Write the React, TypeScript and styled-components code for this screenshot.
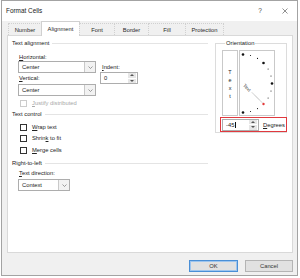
import styled, { createGlobalStyle } from "styled-components";

const GlobalStyle = createGlobalStyle`
  html, body {
    margin: 0;
    padding: 0;
    background: #ffffff;
  }
  body {
    font-family: "Liberation Sans", Arial, sans-serif;
    font-size: 5.8px;
    line-height: 8px;
    color: #222222;
  }
`;

const Window = styled.div`
  box-sizing: border-box;
  width: 297px;
  height: 276px;
  margin-left: 1px;
  border: 1px solid #a3a3a3;
  background: #f0f0f0;
  display: flex;
  flex-direction: column;
`;

const TitleBar = styled.div`
  height: 20px;
  background: #ffffff;
  display: flex;
  align-items: center;
  padding-left: 4px;
`;

const Title = styled.div`
  flex: 1;
  font-size: 6.4px;
  color: #1a1a1a;
`;

const TitleButton = styled.div<{ $w: number }>`
  width: ${(p) => p.$w}px;
  height: 20px;
  display: flex;
  align-items: center;
  justify-content: center;
  font-size: 6.6px;
  color: #444444;
`;

const TabRow = styled.div`
  display: flex;
  align-items: flex-end;
  height: 14px;
  margin-left: 6px;
  position: relative;
  z-index: 1;
`;

const Tab = styled.div<{ $w: number; $active?: boolean }>`
  box-sizing: border-box;
  width: ${(p) => p.$w}px;
  height: ${(p) => (p.$active ? 15 : 12)}px;
  margin-right: -1px;
  margin-bottom: ${(p) => (p.$active ? -1 : 0)}px;
  border: 1px ${(p) => (p.$active ? "solid" : "dotted")} #d0d0d0;
  border-bottom: none;
  background: ${(p) => (p.$active ? "#ffffff" : "#f0f0f0")};
  display: flex;
  align-items: center;
  justify-content: center;
  color: #2a2a2a;
`;

const Panel = styled.div`
  box-sizing: border-box;
  margin: 0 4px 0 5px;
  height: 218px;
  background: #ffffff;
  border: 1px solid #d9d9d9;
  padding: 3px 5px 0 4px;
  display: flex;
  gap: 7px;
`;

const LeftColumn = styled.div`
  width: 196px;
  display: flex;
  flex-direction: column;
`;

const SectionHeader = styled.div<{ $gap: number }>`
  display: flex;
  align-items: center;
  gap: 3px;
  height: 8px;
  margin-top: ${(p) => p.$gap}px;

  &::after {
    content: "";
    flex: 1;
    height: 1px;
    background: #e4e4e4;
  }
`;

const FieldLabel = styled.div<{ $gap: number; $indent?: number }>`
  height: 8px;
  margin-top: ${(p) => p.$gap}px;
  margin-left: ${(p) => p.$indent ?? 7}px;
`;

const Key = styled.span`
  text-decoration: underline;
  text-underline-offset: 1px;
`;

const AlignBlock = styled.div`
  display: flex;
`;

const FieldGroup = styled.div<{ $left: number }>`
  display: flex;
  flex-direction: column;
  margin-left: ${(p) => p.$left}px;
`;

const Select = styled.div<{ $w: number; $gap: number }>`
  box-sizing: border-box;
  width: ${(p) => p.$w}px;
  height: 12px;
  margin-top: ${(p) => p.$gap}px;
  margin-left: 6px;
  border: 1px solid #adadad;
  background: #ffffff;
  display: flex;
`;

const SelectValue = styled.span`
  flex: 1;
  padding-left: 3px;
  display: flex;
  align-items: center;
`;

const SelectArrow = styled.span`
  width: 10px;
  border-left: 1px solid #c9c9c9;
  background: #f2f2f2;
  display: flex;
  align-items: center;
  justify-content: center;
`;

const Spin = styled.div<{ $w: number; $gap: number }>`
  box-sizing: border-box;
  width: ${(p) => p.$w}px;
  height: 12px;
  margin-top: ${(p) => p.$gap}px;
  border: 1px solid #adadad;
  background: #ffffff;
  display: flex;
`;

const SpinText = styled.span`
  flex: 1;
  padding-left: 3px;
  display: flex;
  align-items: center;
`;

const SpinArrows = styled.span`
  width: 8px;
  display: flex;
  flex-direction: column;
  gap: 1px;
  padding: 0 1px 0 0;
`;

const SpinArrow = styled.span`
  flex: 1;
  background: #e6e6e6;
  display: flex;
  align-items: center;
  justify-content: center;
`;

const CheckRow = styled.div<{ $gap: number; $disabled?: boolean }>`
  display: flex;
  align-items: center;
  gap: 5px;
  height: 8px;
  margin-top: ${(p) => p.$gap}px;
  margin-left: 8px;
  color: ${(p) => (p.$disabled ? "#a8a8a8" : "#222222")};
`;

const CheckBox = styled.span<{ $disabled?: boolean }>`
  box-sizing: border-box;
  width: 7px;
  height: 7px;
  border: 1px solid ${(p) => (p.$disabled ? "#cccccc" : "#333333")};
  background: #ffffff;
`;

const OrientationGroup = styled.fieldset`
  box-sizing: border-box;
  width: 72px;
  height: 94px;
  margin: 0;
  padding: 3px 0 0 6px;
  border: 1px solid #dcdcdc;
  display: flex;
  flex-direction: column;
  min-width: 0;
`;

const Legend = styled.legend`
  padding: 0 1px;
  margin-left: 3px;
  line-height: 8px;
`;

const DialRow = styled.div`
  display: flex;
  gap: 1px;
  height: 66px;
`;

const StackedBox = styled.div`
  box-sizing: border-box;
  width: 16px;
  border: 1px solid #c9c9c9;
  display: flex;
  flex-direction: column;
  align-items: center;
  justify-content: center;
  padding-top: 2px;
`;

const StackedLetter = styled.span`
  height: 8px;
  font-size: 5.4px;
`;

const DialBox = styled.div`
  box-sizing: border-box;
  width: 36px;
  border: 1px solid #c9c9c9;
  display: flex;
`;

const DegreeRow = styled.div`
  box-sizing: border-box;
  width: 67px;
  height: 15px;
  margin: 1px 0 0 -2px;
  border: 1px solid #e0393e;
  display: flex;
  align-items: center;
  padding-left: 1px;
  gap: 4px;
`;

const Caret = styled.span`
  display: inline-block;
  width: 1px;
  height: 6px;
  margin-left: 1px;
  background: #111111;
  vertical-align: middle;
`;

const ButtonRow = styled.div`
  display: flex;
  justify-content: flex-end;
  gap: 7px;
  margin-top: 7px;
  padding-right: 4px;
`;

const Button = styled.div<{ $w: number; $default?: boolean }>`
  box-sizing: border-box;
  width: ${(p) => p.$w}px;
  height: 12px;
  background: #e1e1e1;
  border: 1px solid ${(p) => (p.$default ? "#4a8fd6" : "#b4b4b4")};
  box-shadow: ${(p) => (p.$default ? "inset 0 0 0 1px #9ec5ee" : "none")};
  display: flex;
  align-items: center;
  justify-content: center;
  color: #333333;
`;

const Chevron = () => (
  <svg width="5" height="3" viewBox="0 0 5 3">
    <path d="M0.5 0.5 L2.5 2.5 L4.5 0.5" fill="none" stroke="#777" strokeWidth="0.7" />
  </svg>
);

const Triangle = ({ up }: { up?: boolean }) => (
  <svg width="4" height="2" viewBox="0 0 4 2">
    <path d={up ? "M0 2 L2 0 L4 2 Z" : "M0 0 L2 2 L4 0 Z"} fill="#555" />
  </svg>
);

const Dial = () => {
  const cx = 3;
  const cy = 32.5;
  const r = 29;
  const dots = [];
  for (let a = 90; a >= -90; a -= 15) {
    const rad = (a * Math.PI) / 180;
    const x = cx + r * Math.cos(rad);
    const y = cy - r * Math.sin(rad);
    const big = a === 90 || a === 45 || a === 0 || a === -90;
    const red = a === -45;
    dots.push(
      <circle
        key={a}
        cx={x}
        cy={y}
        r={red ? 1.2 : big ? 1.3 : 0.55}
        fill={red ? "#e23a3a" : "#111"}
      />
    );
  }
  const d = Math.SQRT1_2;
  return (
    <svg width="34" height="64" viewBox="0 0 34 64">
      {dots}
      <text
        transform={`translate(${cx} ${cy}) rotate(45)`}
        x="1.5"
        y="1.8"
        fontSize="4.8"
        fontFamily="Liberation Sans, Arial, sans-serif"
        fill="#333"
      >
        Text
      </text>
      <line
        x1={cx + 13 * d}
        y1={cy + 13 * d}
        x2={cx + 27.5 * d}
        y2={cy + 27.5 * d}
        stroke="#444"
        strokeWidth="0.6"
        strokeDasharray="0.8 0.8"
      />
    </svg>
  );
};

const tabs = [
  { name: "Number", w: 34 },
  { name: "Alignment", w: 39, active: true },
  { name: "Font", w: 36 },
  { name: "Border", w: 35 },
  { name: "Fill", w: 38 },
  { name: "Protection", w: 39 },
];

const App = () => {
  return (
    <>
      <GlobalStyle />
      <Window>
        <TitleBar>
          <Title>Format Cells</Title>
          <TitleButton $w={24}>?</TitleButton>
          <TitleButton $w={25}>
            <svg width="6" height="6" viewBox="0 0 6 6">
              <path d="M0.5 0.5 L5.5 5.5 M5.5 0.5 L0.5 5.5" stroke="#444" strokeWidth="0.6" />
            </svg>
          </TitleButton>
        </TitleBar>

        <TabRow>
          {tabs.map((t) => (
            <Tab key={t.name} $w={t.w} $active={t.active}>
              {t.name}
            </Tab>
          ))}
        </TabRow>

        <Panel>
          <LeftColumn>
            <SectionHeader $gap={0}>Text alignment</SectionHeader>
            <AlignBlock>
              <FieldGroup $left={0}>
                <FieldLabel $gap={6}>
                  <Key>H</Key>orizontal:
                </FieldLabel>
                <Select $w={78} $gap={0}>
                  <SelectValue>Center</SelectValue>
                  <SelectArrow>
                    <Chevron />
                  </SelectArrow>
                </Select>
                <FieldLabel $gap={1}>
                  <Key>V</Key>ertical:
                </FieldLabel>
                <Select $w={78} $gap={2}>
                  <SelectValue>Center</SelectValue>
                  <SelectArrow>
                    <Chevron />
                  </SelectArrow>
                </Select>
              </FieldGroup>
              <FieldGroup $left={4}>
                <FieldLabel $gap={16} $indent={2}>
                  <Key>I</Key>ndent:
                </FieldLabel>
                <Spin $w={38} $gap={1}>
                  <SpinText>0</SpinText>
                  <SpinArrows>
                    <SpinArrow>
                      <Triangle up />
                    </SpinArrow>
                    <SpinArrow>
                      <Triangle />
                    </SpinArrow>
                  </SpinArrows>
                </Spin>
              </FieldGroup>
            </AlignBlock>
            <CheckRow $gap={3} $disabled>
              <CheckBox $disabled />
              <span>
                <Key>J</Key>ustify distributed
              </span>
            </CheckRow>

            <SectionHeader $gap={3}>Text control</SectionHeader>
            <CheckRow $gap={5}>
              <CheckBox />
              <span>
                <Key>W</Key>rap text
              </span>
            </CheckRow>
            <CheckRow $gap={3}>
              <CheckBox />
              <span>
                Shrin<Key>k</Key> to fit
              </span>
            </CheckRow>
            <CheckRow $gap={4}>
              <CheckBox />
              <span>
                <Key>M</Key>erge cells
              </span>
            </CheckRow>

            <SectionHeader $gap={5}>Right-to-left</SectionHeader>
            <FieldLabel $gap={2}>
              <Key>T</Key>ext direction:
            </FieldLabel>
            <Select $w={52} $gap={2}>
              <SelectValue>Context</SelectValue>
              <SelectArrow>
                <Chevron />
              </SelectArrow>
            </Select>
          </LeftColumn>

          <OrientationGroup>
            <Legend>Orientation</Legend>
            <DialRow>
              <StackedBox>
                <StackedLetter>T</StackedLetter>
                <StackedLetter>e</StackedLetter>
                <StackedLetter>x</StackedLetter>
                <StackedLetter>t</StackedLetter>
              </StackedBox>
              <DialBox>
                <Dial />
              </DialBox>
            </DialRow>
            <DegreeRow>
              <Spin $w={37} $gap={0}>
                <SpinText>
                  -45
                  <Caret />
                </SpinText>
                <SpinArrows>
                  <SpinArrow>
                    <Triangle up />
                  </SpinArrow>
                  <SpinArrow>
                    <Triangle />
                  </SpinArrow>
                </SpinArrows>
              </Spin>
              <span>
                <Key>D</Key>egrees
              </span>
            </DegreeRow>
          </OrientationGroup>
        </Panel>

        <ButtonRow>
          <Button $w={49} $default>
            OK
          </Button>
          <Button $w={48}>Cancel</Button>
        </ButtonRow>
      </Window>
    </>
  );
};

export default App;
